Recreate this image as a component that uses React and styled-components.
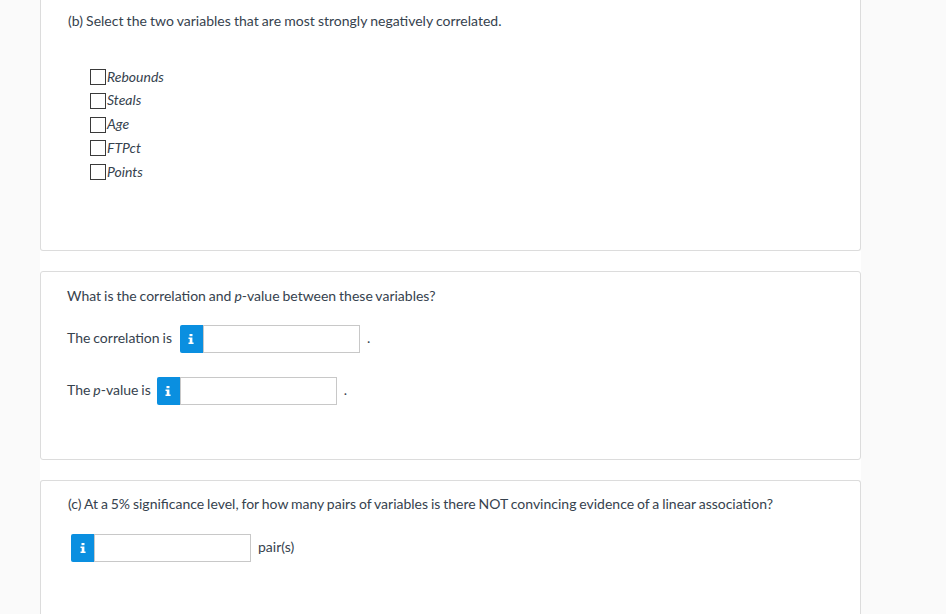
import styled, { createGlobalStyle } from 'styled-components';

const GlobalStyle = createGlobalStyle`
  html, body {
    margin: 0;
    padding: 0;
    height: 100%;
    overflow: hidden;
    background: #fafafa;
  }
  body {
    font-family: 'Lato', 'Liberation Sans', sans-serif;
    font-size: 14px;
    word-spacing: -0.65px;
    color: #36424e;
  }
`;

const Page = styled.div`
  width: 821px;
  height: 614px;
  margin-left: 40px;
  background: #fff;
  display: flex;
  flex-direction: column;
  gap: 20px;
  overflow: hidden;
`;

const Card = styled.section`
  box-sizing: border-box;
  height: ${props => props.$height}px;
  flex: none;
  padding: ${props => props.$top}px 26px 0;
  background: #fff;
  border: 1px solid #dcdcdc;
  border-top: ${props => (props.$open ? 'none' : '1px solid #dcdcdc')};
  border-bottom: ${props => (props.$cut ? 'none' : '1px solid #dcdcdc')};
  border-radius: ${props => (props.$open ? '0 0 3px 3px' : props.$cut ? '3px 3px 0 0' : '3px')};
`;

const Question = styled.p`
  margin: 0 0 0 ${props => props.$shift || 0}px;
  line-height: 20px;
  font-size: 14px;
  word-spacing: ${props => props.$spacing || -0.65}px;
`;

const OptionList = styled.ul`
  list-style: none;
  margin: 38px 0 0 23px;
  padding: 0;
  display: flex;
  flex-direction: column;
  gap: 7.75px;
`;

const Option = styled.li`
  display: flex;
  align-items: center;
  height: 16px;
  font-style: italic;
`;

const OptionName = styled.span`
  margin-bottom: 2px;
`;

const Box = styled.span`
  box-sizing: border-box;
  width: 16px;
  height: 16px;
  margin-right: 1px;
  border: 1px solid #3a3a3a;
  background: #fff;
  flex: none;
`;

const AnswerRow = styled.div`
  display: flex;
  align-items: center;
  height: 28px;
  margin-top: ${props => props.$gap}px;
  margin-left: ${props => props.$indent || 0}px;
`;

const RowText = styled.span`
  margin-bottom: 4px;
  margin-left: ${props => props.$gap || 0}px;
`;

const InfoButton = styled.span`
  box-sizing: border-box;
  width: 23px;
  height: 28px;
  margin-left: ${props => props.$gap || 0}px;
  background: #0a8fe0;
  border-radius: 2px 0 0 2px;
  color: #fff;
  display: flex;
  align-items: center;
  justify-content: center;
  flex: none;
`;

const Field = styled.span`
  box-sizing: border-box;
  display: block;
  width: 157px;
  height: 28px;
  border: 1px solid #c8c8c8;
  background: #fff;
  flex: none;
`;

const InfoIcon = () => (
  <svg width="6" height="10" viewBox="0 0 6 10" fill="currentColor">
    <rect x="1.5" y="0" width="3" height="2.2" />
    <path d="M0.5 3.6H4.4V8.6H5.6V10H0.5V8.6H1.7V5H0.5Z" />
  </svg>
);

const Answer = ({ label, labelGap, tail, gap, indent }) => (
  <AnswerRow $gap={gap} $indent={indent}>
    {label && <RowText>{label}</RowText>}
    <InfoButton $gap={labelGap}>
      <InfoIcon />
    </InfoButton>
    <Field />
    <RowText $gap={7}>{tail}</RowText>
  </AnswerRow>
);

const variables = ['Rebounds', 'Steals', 'Age', 'FTPct', 'Points'];

export default function App() {
  return (
    <>
      <GlobalStyle />
      <Page>
        <Card $open $height={251} $top={11}>
          <Question $shift={1} $spacing={-0.4}>
            (b) Select the two variables that are most strongly negatively correlated.
          </Question>
          <OptionList>
            {variables.map(name => (
              <Option key={name}>
                <Box />
                <OptionName>{name}</OptionName>
              </Option>
            ))}
          </OptionList>
        </Card>
        <Card $height={189} $top={14}>
          <Question>
            What is the correlation and <em>p</em>-value between these variables?
          </Question>
          <Answer gap={19} label="The correlation is" labelGap={8} tail="." />
          <Answer
            gap={24}
            label={
              <>
                The <em>p</em>-value is
              </>
            }
            labelGap={6}
            tail="."
          />
        </Card>
        <Card $cut $height={140} $top={13}>
          <Question $shift={1} $spacing={-0.7}>
            (c) At a 5% significance level, for how many pairs of variables is there NOT convincing evidence of a linear association?
          </Question>
          <Answer gap={20} indent={4} tail="pair(s)" />
        </Card>
      </Page>
    </>
  );
}
